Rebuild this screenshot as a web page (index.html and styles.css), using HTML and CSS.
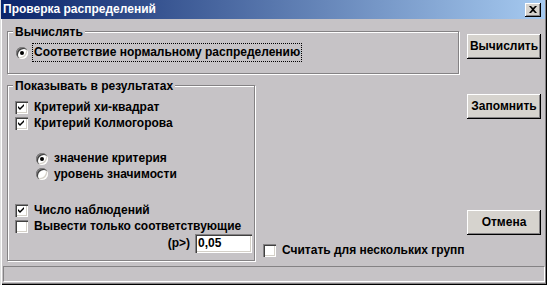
FILE: index.html
```html
<!DOCTYPE html>
<html lang="ru">
<head>
<meta charset="utf-8">
<title>Проверка распределений</title>
<link rel="stylesheet" href="styles.css">
</head>
<body>
<div class="window">
  <div class="titlebar">
    <span class="title">Проверка распределений</span>
    <span class="close"><svg width="8" height="7" viewBox="0 0 8 7"><path d="M0 0h2l2 2 2-2h2L5 3.5 8 7H6L4 5 2 7H0l3-3.5z" fill="#000"/></svg></span>
  </div>
  <div class="main">
    <div class="left">
      <div class="group g1">
        <span class="legend">Вычислять</span>
        <div class="opt">
          <span class="radio checked"></span>
          <span class="focus">Соответствие нормальному распределению</span>
        </div>
      </div>
      <div class="lower">
        <div class="group g2">
          <span class="legend">Показывать в результатах</span>
          <div class="row"><span class="cb"><svg width="13" height="13" viewBox="0 0 13 13"><path d="M3 5v2l2 2 4-4V3L5 7z" fill="#000"/></svg></span><span>Критерий хи-квадрат</span></div>
          <div class="row"><span class="cb"><svg width="13" height="13" viewBox="0 0 13 13"><path d="M3 5v2l2 2 4-4V3L5 7z" fill="#000"/></svg></span><span>Критерий Колмогорова</span></div>
          <div class="radios">
            <div class="row rrow"><span class="radio checked"></span><span>значение критерия</span></div>
            <div class="row rrow"><span class="radio"></span><span>уровень значимости</span></div>
          </div>
          <div class="row sep"><span class="cb"><svg width="13" height="13" viewBox="0 0 13 13"><path d="M3 5v2l2 2 4-4V3L5 7z" fill="#000"/></svg></span><span>Число наблюдений</span></div>
          <div class="row"><span class="cb"></span><span>Вывести только соответствующие</span></div>
          <div class="prow"><span class="plabel">(p&gt;)</span><span class="input">0,05</span></div>
        </div>
        <div class="row extra"><span class="cb"></span><span>Считать для нескольких групп</span></div>
      </div>
    </div>
    <div class="right">
      <div class="btn b1">Вычислить</div>
      <div class="btn b2">Запомнить</div>
      <div class="btn b3">Отмена</div>
    </div>
  </div>
  <div class="status"></div>
</div>
</body>
</html>
```
FILE: styles.css
```css
html, body {
  margin: 0;
  padding: 0;
  background: #c6c3c6;
}
body {
  font-family: "Liberation Sans", Arial, sans-serif;
  font-size: 12px;
  font-weight: bold;
  line-height: 15px;
  color: #000;
}
.window {
  width: 547px;
  height: 285px;
  box-sizing: border-box;
  background: #c6c3c6;
  display: flex;
  flex-direction: column;
  box-shadow: inset 1px 0 #dfdfdf, inset 2px 0 #fff, inset -1px -1px #000, inset -2px -2px #848284;
  overflow: hidden;
}
.titlebar {
  height: 19px;
  margin: 0 2px 0 1px;
  padding: 0 4px 0 2px;
  display: flex;
  align-items: center;
  justify-content: space-between;
  background: linear-gradient(to right, #0a246a, #a6caf0);
  flex: none;
}
.title {
  color: #fff;
  font-size: 12px;
}
.close {
  width: 16px;
  height: 14px;
  box-sizing: border-box;
  background: #d6d3ce;
  box-shadow: inset -1px -1px #000, inset 1px 1px #fff, inset -2px -2px #848284;
  display: flex;
  align-items: center;
  justify-content: center;
  padding-right: 1px;
}
.close svg { display: block; }
.main {
  display: flex;
  padding-left: 7px;
  flex: none;
}
.left {
  width: 452px;
  flex: none;
  padding-top: 12px;
}
.group {
  position: relative;
  box-sizing: border-box;
  border: 1px solid #848284;
  box-shadow: inset 1px 1px #fff, 1px 1px #fff;
}
.legend {
  position: absolute;
  top: -7px;
  left: 5px;
  padding: 0 2px;
  background: #c6c3c6;
  line-height: 14px;
  white-space: nowrap;
}
.g1 {
  height: 43px;
  display: flex;
  align-items: center;
  padding-left: 8px;
}
.opt {
  display: flex;
  align-items: center;
  gap: 4px;
}
.focus {
  border: 1px dotted #000;
  padding: 1px 1px;
  line-height: 15px;
}
.radio {
  width: 12px;
  height: 12px;
  border-radius: 50%;
  background: #fff;
  box-shadow: inset 1px 1px #848284, inset 2px 2px #404040, inset -1px -1px #fff, inset -2px -2px #d4d0c8;
  display: flex;
  align-items: center;
  justify-content: center;
  flex: none;
}
.radio.checked::after {
  content: "";
  width: 4px;
  height: 4px;
  border-radius: 50%;
  background: #000;
}
.lower {
  display: flex;
  align-items: flex-end;
  margin-top: 11px;
}
.g2 {
  width: 248px;
  height: 176px;
  flex: none;
  padding: 13px 2px 0 7px;
}
.row {
  height: 16px;
  display: flex;
  align-items: center;
  gap: 6px;
  white-space: nowrap;
}
.cb {
  width: 13px;
  height: 13px;
  background: #fff;
  box-shadow: inset 1px 1px #848284, inset 2px 2px #404040, inset -1px -1px #fff, inset -2px -2px #d4d0c8;
  flex: none;
}
.cb svg { display: block; }
.radios {
  margin-top: 20px;
  padding-left: 21px;
}
.rrow { height: 15.5px; }
.sep { margin-top: 20px; }
.prow {
  height: 19px;
  display: flex;
  align-items: center;
  justify-content: flex-end;
  gap: 5px;
}
.input {
  width: 57px;
  height: 19px;
  box-sizing: border-box;
  background: #fff;
  box-shadow: inset 1px 1px #848284, inset 2px 2px #404040, inset -1px -1px #fff, inset -2px -2px #d4d0c8;
  padding: 2px 0 0 3px;
  line-height: 15px;
}
.extra {
  height: 13px;
  flex: none;
  margin: 0 0 4px 8px;
}
.right {
  margin-left: 8px;
  display: flex;
  flex-direction: column;
  flex: none;
}
.btn {
  width: 74px;
  height: 25px;
  box-sizing: border-box;
  background: #d6d3ce;
  box-shadow: inset -1px -1px #000, inset 1px 1px #fff, inset -2px -2px #848284;
  display: flex;
  align-items: center;
  justify-content: center;
}
.b1 { margin-top: 15px; }
.b2 { margin-top: 35px; }
.b3 { margin-top: 91px; }
.status {
  margin: auto 2px 3px 3px;
  height: 16px;
  box-sizing: border-box;
  border-top: 1px solid #848284;
  border-left: 1px solid #848284;
  border-bottom: 1px solid #fff;
  border-right: 1px solid #fff;
  flex: none;
}
```
